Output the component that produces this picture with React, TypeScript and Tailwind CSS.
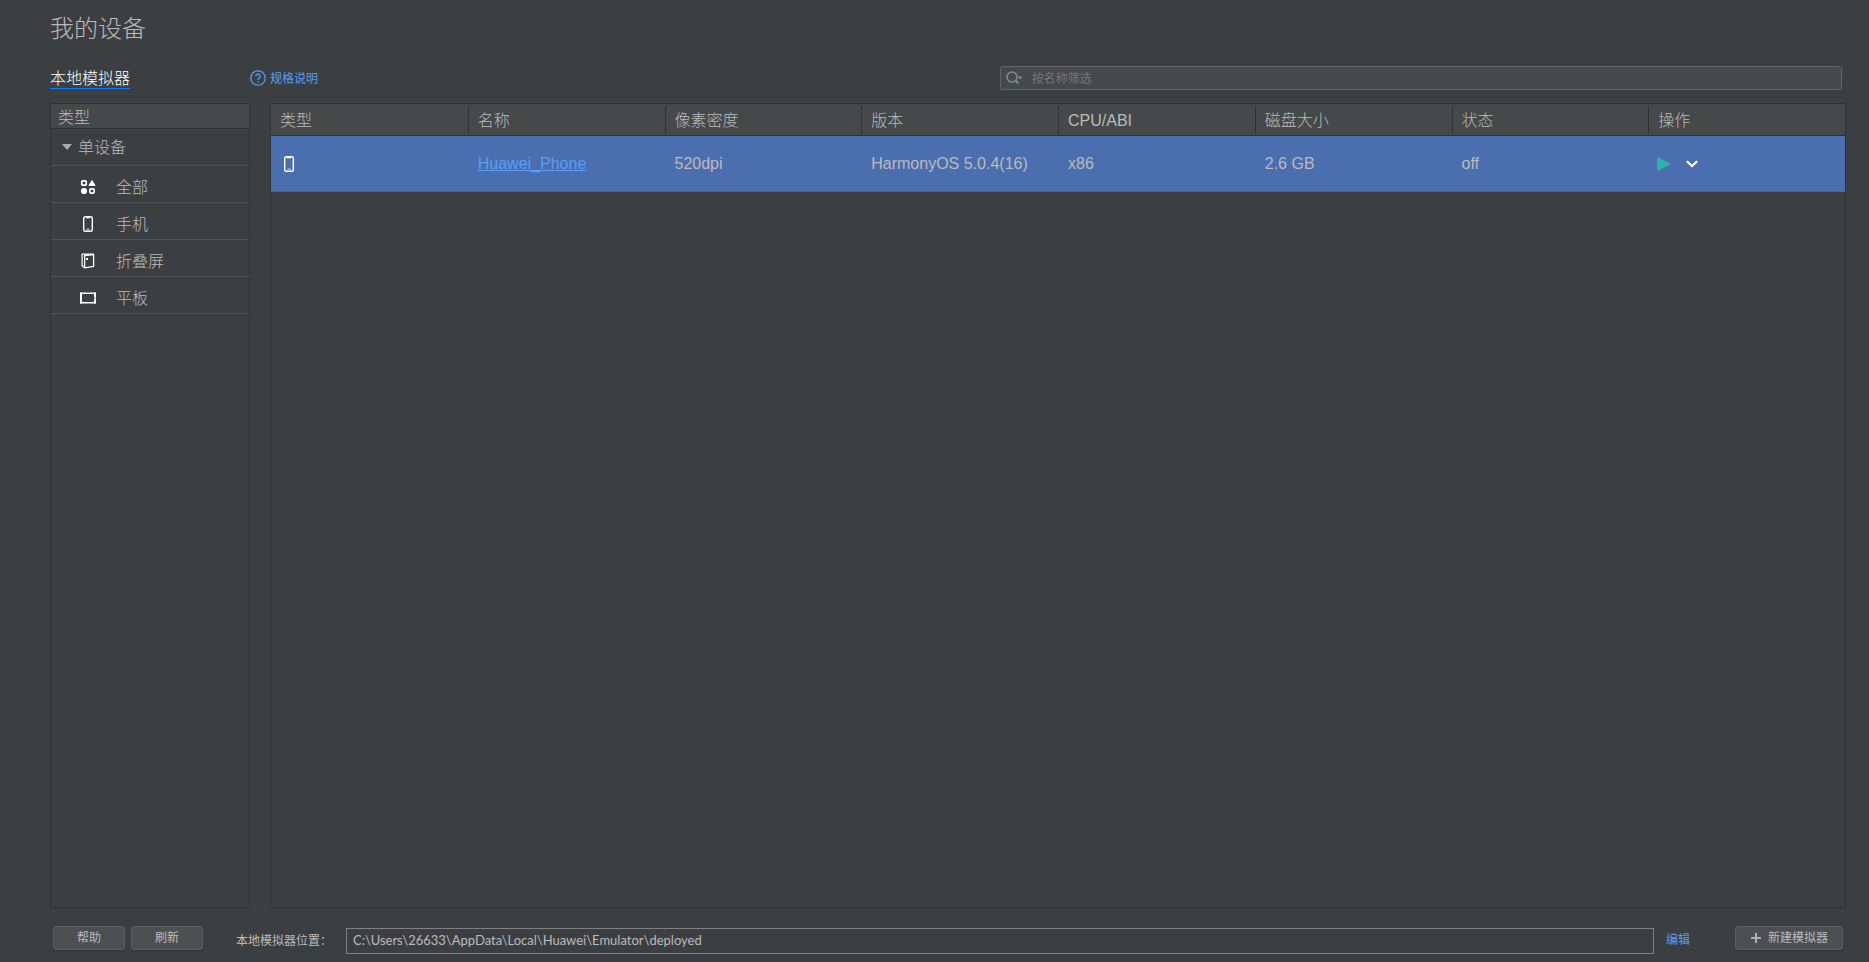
import type { ReactNode } from "react";

function PhoneIcon() {
  return (
    <svg width="16" height="16" viewBox="0 0 16 16" fill="none" aria-hidden="true">
      <rect x="3.7" y="0.7" width="8.6" height="14.6" rx="1.6" stroke="#fff" strokeWidth="1.4" />
      <path d="M6 1.7h4" stroke="#fff" strokeWidth="1.2" />
      <path d="M6.5 13.5h3" stroke="#b8b8b8" strokeWidth="2" />
    </svg>
  );
}

function AllIcon() {
  return (
    <svg width="16" height="16" viewBox="0 0 16 16" fill="none" aria-hidden="true">
      <rect x="1.8" y="1.8" width="4.4" height="4.4" rx="1" stroke="#fff" strokeWidth="1.7" />
      <path d="M12 0.8l3.4 5.5a.5.5 0 0 1-.4.7H9a.5.5 0 0 1-.4-.7z" fill="#fff" />
      <circle cx="4" cy="12" r="3.1" fill="#fff" />
      <rect x="9.8" y="9.8" width="4.4" height="4.4" rx="1.4" stroke="#fff" strokeWidth="1.7" />
    </svg>
  );
}

function FoldIcon() {
  return (
    <svg width="16" height="16" viewBox="0 0 16 16" fill="none" aria-hidden="true">
      <path d="M4.6 2.6l9-1.1v11.9l-9 1.5z" stroke="#fff" strokeWidth="1.3" strokeLinejoin="round" />
      <path d="M13.4 1.2H2.1v11.6l2.5 2" stroke="#fff" strokeWidth="1.2" strokeLinejoin="round" />
      <rect x="6" y="5" width="2" height="2" fill="#fff" />
    </svg>
  );
}

function TabletIcon() {
  return (
    <svg width="16" height="16" viewBox="0 0 16 16" fill="none" aria-hidden="true">
      <path d="M0 3.2h16M0 12.8h16" stroke="#fff" strokeWidth="1.5" />
      <path d="M1 2.5v11M15 2.5v11" stroke="#fff" strokeWidth="2" />
      <path d="M14.5 7v2" stroke="#a0a0a0" strokeWidth="1" />
    </svg>
  );
}

const deviceTypes: { label: string; icon: ReactNode }[] = [
  { label: "全部", icon: <AllIcon /> },
  { label: "手机", icon: <PhoneIcon /> },
  { label: "折叠屏", icon: <FoldIcon /> },
  { label: "平板", icon: <TabletIcon /> },
];

const columns = ["类型", "名称", "像素密度", "版本", "CPU/ABI", "磁盘大小", "状态", "操作"];

const footerButton =
  "flex h-6 items-center justify-center rounded-[3px] border border-[#5e6060] bg-[#4c5052] text-xs text-[#bbbbbb] shadow-[0_1px_1px_#323537]";

function TypePanel() {
  return (
    <nav aria-label="类型" className="w-50 shrink-0 border border-[#323232] text-base font-light">
      <h2 className="h-[25px] border-b border-[#323232] bg-[#45494a] pl-[7px] leading-[27px]">类型</h2>
      <button className="flex h-[37px] w-full items-center border-b border-[#505355] pt-0.5 pl-[11px] text-left">
        <svg className="mr-1.5" width="10" height="16" viewBox="0 0 10 16" aria-hidden="true">
          <path d="M0 4h10L5 10z" fill="#adadad" />
        </svg>
        单设备
      </button>
      <ul>
        {deviceTypes.map((type) => (
          <li key={type.label} className="border-b border-[#505355]">
            <button className="flex h-9 w-full items-center gap-5 pt-1.5 pl-[29px] text-left">
              {type.icon}
              <span className="pt-0.5">{type.label}</span>
            </button>
          </li>
        ))}
      </ul>
    </nav>
  );
}

function DeviceTable() {
  return (
    <section className="min-w-0 grow border border-[#323232]">
      <table className="w-full table-fixed border-separate border-spacing-0 text-base">
        <thead>
          <tr className="bg-[#45494a]">
            {columns.map((column, index) => (
              <th key={column} scope="col" className="h-8 border-b border-[#323232] p-0 text-left font-light">
                <div
                  className={
                    index === 0
                      ? "h-7 pl-[9px] leading-[30px]"
                      : "h-7 border-l border-[#323232] pl-[9px] leading-[30px]"
                  }
                >
                  {column}
                </div>
              </th>
            ))}
          </tr>
        </thead>
        <tbody>
          <tr className="bg-[#4b6eaf] *:h-14 *:border-b *:border-[#616365] *:py-0 *:pr-0">
            <td className="pl-[10px]">
              <PhoneIcon />
            </td>
            <td className="pl-[10px]">
              <a href="#device" className="text-[#589df6] underline">
                Huawei_Phone
              </a>
            </td>
            <td className="pl-[10px]">520dpi</td>
            <td className="pl-[10px]">HarmonyOS 5.0.4(16)</td>
            <td className="pl-[10px]">x86</td>
            <td className="pl-[10px]">2.6 GB</td>
            <td className="pl-[10px]">off</td>
            <td className="pl-2">
              <div className="flex items-center gap-3">
                <button aria-label="启动">
                  <svg width="16" height="16" viewBox="0 0 16 16" aria-hidden="true">
                    <path d="M1.2 1v14L15 8z" fill="#2fb3a8" />
                  </svg>
                </button>
                <button aria-label="更多">
                  <svg width="16" height="16" viewBox="0 0 16 16" fill="none" aria-hidden="true">
                    <path d="M2.8 5.2L8 10l5.2-4.8" stroke="#fff" strokeWidth="2.2" />
                  </svg>
                </button>
              </div>
            </td>
          </tr>
        </tbody>
      </table>
    </section>
  );
}

export default function App() {
  return (
    <div className="flex min-h-screen flex-col bg-[#3c3f41] pr-[23px] pl-[50px] font-['Liberation_Sans','Noto_Sans_CJK_SC',sans-serif] text-[#bbbbbb]">
      <h1 className="pt-[13px] text-2xl leading-8 font-light">我的设备</h1>

      <div className="mt-[21px] flex h-6 items-center pr-1">
        <div className="w-50">
          <button className="block h-[21px] border-b border-[#0a7aff] text-base leading-[22px] font-light text-white">
            本地模拟器
          </button>
        </div>
        <a href="#spec" className="flex items-center gap-1 text-xs text-[#589df6]">
          <svg width="16" height="16" viewBox="0 0 16 16" fill="none" aria-hidden="true">
            <circle cx="8" cy="8" r="7.2" stroke="#589df6" strokeWidth="1.3" />
            <path d="M5.8 6.4a2.2 2.2 0 1 1 3.3 1.9c-.8.5-1.1.8-1.1 1.7" stroke="#589df6" strokeWidth="1.3" />
            <path d="M8 11.2v1.4" stroke="#589df6" strokeWidth="1.4" />
          </svg>
          <span className="pt-0.5">规格说明</span>
        </a>
        <div className="relative ml-auto w-[47%]">
          <svg className="absolute top-1 left-1.5" width="20" height="16" viewBox="0 0 20 16" fill="none" aria-hidden="true">
            <circle cx="6" cy="7" r="5" stroke="#7f8b91" strokeWidth="1.5" />
            <path d="M9.5 10.5l3 3" stroke="#7f8b91" strokeWidth="1.8" />
            <path d="M11.5 6.5h5l-2.5 3z" fill="#7f8b91" />
          </svg>
          <input
            type="text"
            aria-label="按名称筛选"
            placeholder="按名称筛选"
            className="block h-6 w-full rounded-[3px] border border-[#646464] bg-[#45494a] pt-px pl-[31px] text-xs outline-none placeholder:text-[#777777]"
          />
        </div>
      </div>

      <div className="mt-[13px] flex grow gap-5">
        <TypePanel />
        <DeviceTable />
      </div>

      <footer className="flex h-[54px] items-start pt-[18px] pr-[3px] pl-[3px] text-xs">
        <button className={footerButton + " w-18"}>帮助</button>
        <button className={footerButton + " ml-1.5 w-18"}>刷新</button>
        <label htmlFor="path" className="mt-0.5 ml-[33px] w-[110px] leading-[26px]">
          本地模拟器位置：
        </label>
        <input
          id="path"
          type="text"
          readOnly
          value="C:\Users\26633\AppData\Local\Huawei\Emulator\deployed"
          className="mt-0.5 h-[26px] min-w-0 grow border border-[#808080] pb-0.5 pl-1.5 font-['Lato',sans-serif] text-[13px] outline-none"
        />
        <a href="#edit" className="mt-0.5 ml-3 leading-6 text-[#589df6]">
          编辑
        </a>
        <button className={footerButton + " ml-[45px] w-27 gap-1.5"}>
          <svg width="12" height="12" viewBox="0 0 12 12" aria-hidden="true">
            <path d="M5 1h2v4h4v2H7v4H5V7H1V5h4z" fill="#afb1b3" />
          </svg>
          新建模拟器
        </button>
      </footer>
    </div>
  );
}
